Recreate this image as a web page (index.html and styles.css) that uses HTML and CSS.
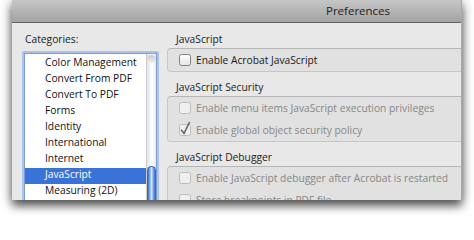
FILE: index.html
```html
<!DOCTYPE html>
<html>
<head>
<meta charset="utf-8">
<title>Preferences</title>
<link rel="stylesheet" href="styles.css">
</head>
<body>
<div class="window">
  <div class="titlebar"><span class="title">Preferences</span></div>
  <div class="content">
    <div class="sidebar">
      <div class="label">Categories:</div>
      <div class="listbox">
        <ul class="list">
          <li>Color Management</li>
          <li>Convert From PDF</li>
          <li>Convert To PDF</li>
          <li>Forms</li>
          <li>Identity</li>
          <li>International</li>
          <li>Internet</li>
          <li class="selected">JavaScript</li>
          <li>Measuring (2D)</li>
        </ul>
        <div class="scrollbar">
          <div class="cap"></div>
          <div class="thumb"></div>
        </div>
      </div>
    </div>
    <div class="panel">
      <div class="heading">JavaScript</div>
      <div class="group">
        <div class="row">
          <svg class="cb" width="12" height="12" viewBox="0 0 12 12"><defs><linearGradient id="g1" x1="0" y1="0" x2="0" y2="1"><stop offset="0" stop-color="#ffffff"/><stop offset="1" stop-color="#e4e4e4"/></linearGradient></defs><rect x="0.5" y="0.5" width="11" height="11" rx="2" fill="url(#g1)" stroke="#808080"/></svg>
          <span>Enable Acrobat JavaScript</span>
        </div>
      </div>

      <div class="heading spaced">JavaScript Security</div>
      <div class="group">
        <div class="row disabled">
          <svg class="cb" width="12" height="12" viewBox="0 0 12 12"><rect x="0.5" y="0.5" width="11" height="11" rx="2" fill="#efefef" stroke="#bdbdbd"/></svg>
          <span>Enable menu items JavaScript execution privileges</span>
        </div>
        <div class="row disabled">
          <svg class="cb" width="12" height="12" viewBox="0 0 12 12" overflow="visible"><rect x="0.5" y="0.5" width="11" height="11" rx="2" fill="#efefef" stroke="#bdbdbd"/><path d="M2.6 6.2 L5 9.6 L10.2 -1.4" fill="none" stroke="#6e6e6e" stroke-width="1.7" stroke-linecap="round" stroke-linejoin="round"/></svg>
          <span>Enable global object security policy</span>
        </div>
      </div>

      <div class="heading spaced">JavaScript Debugger</div>
      <div class="group">
        <div class="row disabled">
          <svg class="cb" width="12" height="12" viewBox="0 0 12 12"><rect x="0.5" y="0.5" width="11" height="11" rx="2" fill="#efefef" stroke="#bdbdbd"/></svg>
          <span>Enable JavaScript debugger after Acrobat is restarted</span>
        </div>
        <div class="row disabled">
          <svg class="cb" width="12" height="12" viewBox="0 0 12 12"><rect x="0.5" y="0.5" width="11" height="11" rx="2" fill="#efefef" stroke="#bdbdbd"/></svg>
          <span>Store breakpoints in PDF file</span>
        </div>
      </div>
    </div>
  </div>
</div>
</body>
</html>
```

FILE: styles.css
```css
html, body {
  margin: 0;
  padding: 0;
  background: #ffffff;
}
body {
  width: 474px;
  height: 221px;
  overflow: hidden;
  font-family: "Open Sans", "Noto Sans", sans-serif;
  font-size: 10.25px;
  font-weight: 500;
  color: #1a1a1a;
}
.window {
  margin-left: 12px;
  width: 450px;
  height: 200px;
  box-sizing: border-box;
  border-right: 1px solid #a9a9a9;
  background: #e8e8e8;
  overflow: hidden;
  display: flex;
  flex-direction: column;
  box-shadow: 0 6px 9px rgba(0, 0, 0, 0.62), 0 0 12px rgba(0, 0, 0, 0.25);
}
.titlebar {
  height: 22px;
  flex: none;
  border-bottom: 1px solid #626262;
  background: linear-gradient(#c6c6c6, #a3a3a3);
  line-height: 22px;
}
.title {
  margin-left: 314px;
  font-size: 11.5px;
  color: #222222;
}
.content {
  flex: 1;
  min-height: 0;
  display: flex;
}
.sidebar {
  width: 155px;
  flex: none;
  box-sizing: border-box;
  padding: 9px 8px 0 10px;
  display: flex;
  flex-direction: column;
}
.label {
  margin-left: 3px;
  line-height: 14px;
  margin-bottom: 5px;
}
.listbox {
  height: 200px;
  flex: none;
  box-sizing: border-box;
  border: 2px solid #a9c3ec;
  border-radius: 2px;
  box-shadow: inset 0 0 0 1px #7f9dd0;
  background: #ffffff;
  display: flex;
  padding: 1px;
}
.list {
  flex: 1;
  list-style: none;
  margin: 0;
  padding: 2px 0 0 0;
}
.list li {
  height: 16px;
  line-height: 12px;
  padding-left: 20px;
  color: #111111;
  white-space: nowrap;
}
.list li.selected {
  background: #3a73d7;
  color: #ffffff;
}
.scrollbar {
  width: 10px;
  flex: none;
  box-sizing: border-box;
  border-left: 1px solid #cccccc;
  background: linear-gradient(to right, #e4e4e4, #f7f7f7 40%, #ffffff 60%, #e8e8e8);
  display: flex;
  flex-direction: column;
}
.cap {
  height: 8px;
  margin: 1px 0 0 0;
  border-radius: 5px 5px 0 0;
  background: linear-gradient(#c8c8c8, #f2f2f2);
}
.thumb {
  margin-top: 103px;
  height: 60px;
  border: 1px solid #3a66b8;
  border-bottom: none;
  border-radius: 5px 5px 0 0;
  background: linear-gradient(to right, #3d6fc9, #8db7f1 30%, #cfe3fb 50%, #8db7f1 70%, #3d6fc9);
}
.panel {
  flex: 1;
  min-width: 0;
  padding-top: 9px;
}
.heading {
  margin-left: 9px;
  line-height: 14px;
  margin-bottom: 2px;
  color: #222222;
}
.heading.spaced {
  margin-top: 8px;
}
.group {
  margin-right: -10px;
  border: 1px solid #c6c6c6;
  border-top-color: #b6b6b6;
  border-radius: 4px;
  background: #e1e1e1;
}
.row {
  height: 22px;
  display: flex;
  align-items: center;
  padding-left: 11px;
  gap: 5px;
  white-space: nowrap;
  color: #1a1a1a;
}
.row.disabled {
  color: #878787;
}
.cb {
  flex: none;
  overflow: visible;
}
```
